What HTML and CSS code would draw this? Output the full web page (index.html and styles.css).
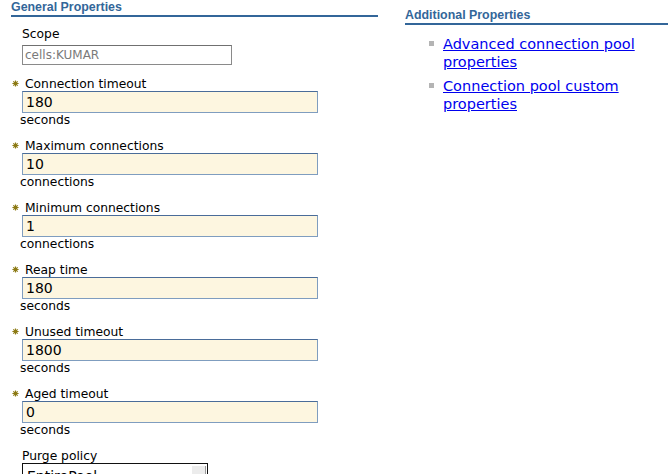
FILE: index.html
```html
<!DOCTYPE html>
<html lang="en">
<head>
<meta charset="utf-8">
<title>Connection pools</title>
<link rel="stylesheet" href="styles.css">
</head>
<body>
<div class="page">
  <section class="col-left">
    <h2 class="section-title">General Properties</h2>
    <div class="scope">
      <div class="plain-label">Scope</div>
      <input class="readonly-field" type="text" value="cells:KUMAR" readonly>
    </div>

    <div class="field">
      <div class="req-label"><svg class="req" viewBox="0 0 7 7"><path d="M3.5 0.4V6.6M0.4 3.5H6.6M1.3 1.3L5.7 5.7M5.7 1.3L1.3 5.7"/></svg><span>Connection timeout</span></div>
      <input class="text-field" type="text" value="180">
      <div class="unit">seconds</div>
    </div>

    <div class="field">
      <div class="req-label"><svg class="req" viewBox="0 0 7 7"><path d="M3.5 0.4V6.6M0.4 3.5H6.6M1.3 1.3L5.7 5.7M5.7 1.3L1.3 5.7"/></svg><span>Maximum connections</span></div>
      <input class="text-field" type="text" value="10">
      <div class="unit">connections</div>
    </div>

    <div class="field">
      <div class="req-label"><svg class="req" viewBox="0 0 7 7"><path d="M3.5 0.4V6.6M0.4 3.5H6.6M1.3 1.3L5.7 5.7M5.7 1.3L1.3 5.7"/></svg><span>Minimum connections</span></div>
      <input class="text-field" type="text" value="1">
      <div class="unit">connections</div>
    </div>

    <div class="field">
      <div class="req-label"><svg class="req" viewBox="0 0 7 7"><path d="M3.5 0.4V6.6M0.4 3.5H6.6M1.3 1.3L5.7 5.7M5.7 1.3L1.3 5.7"/></svg><span>Reap time</span></div>
      <input class="text-field" type="text" value="180">
      <div class="unit">seconds</div>
    </div>

    <div class="field">
      <div class="req-label"><svg class="req" viewBox="0 0 7 7"><path d="M3.5 0.4V6.6M0.4 3.5H6.6M1.3 1.3L5.7 5.7M5.7 1.3L1.3 5.7"/></svg><span>Unused timeout</span></div>
      <input class="text-field" type="text" value="1800">
      <div class="unit">seconds</div>
    </div>

    <div class="field">
      <div class="req-label"><svg class="req" viewBox="0 0 7 7"><path d="M3.5 0.4V6.6M0.4 3.5H6.6M1.3 1.3L5.7 5.7M5.7 1.3L1.3 5.7"/></svg><span>Aged timeout</span></div>
      <input class="text-field" type="text" value="0">
      <div class="unit">seconds</div>
    </div>

    <div class="field">
      <div class="plain-label purge-label">Purge policy</div>
      <div class="listbox">
        <div class="options">
          <div class="option">EntirePool</div>
          <div class="option">FailingConnectionOnly</div>
        </div>
        <div class="scrollbar"></div>
      </div>
    </div>
  </section>

  <section class="col-right">
    <h2 class="section-title">Additional Properties</h2>
    <ul class="links">
      <li><a href="#">Advanced connection pool properties</a></li>
      <li><a href="#">Connection pool custom properties</a></li>
    </ul>
  </section>
</div>
</body>
</html>
```

FILE: styles.css
```css
html, body {
  margin: 0;
  height: 474px;
  overflow: hidden;
  background: #ffffff;
}

body {
  font-family: "DejaVu Sans", sans-serif;
  font-size: 12.3px;
  color: #000;
}

.page {
  display: flex;
  gap: 27px;
  padding-left: 11px;
}

.col-left {
  width: 367px;
  flex: none;
}

.col-right {
  flex: 1;
  padding-top: 8px;
}

.section-title {
  margin: 0;
  font: bold 12.4px/15px "Liberation Sans", Arial, sans-serif;
  color: #336699;
  border-bottom: 2px solid #336699;
}

.scope {
  padding-left: 11px;
  margin-top: 10px;
}

.plain-label {
  line-height: 14px;
}

.readonly-field {
  display: block;
  box-sizing: border-box;
  width: 210px;
  height: 20px;
  margin: 4px 0 0;
  padding: 0 2px;
  border: 1px solid #8a8a8a;
  border-top-color: #707070;
  background: #fff;
  font: 12px "DejaVu Sans", sans-serif;
  color: #7a7a7a;
  outline: none;
}

.field {
  margin-top: 12px;
}

.req-label {
  display: flex;
  align-items: flex-start;
  line-height: 14px;
}

.req {
  width: 7px;
  height: 7px;
  margin: 3px 6px 0 1px;
  flex: none;
  fill: none;
  stroke: #8c7a14;
  stroke-width: 1.2;
}

.text-field {
  display: block;
  box-sizing: border-box;
  margin: 0 0 0 11px;
  width: 296px;
  height: 22px;
  padding: 0 3px;
  border: 1px solid #7f9dbf;
  border-top-color: #4a6c99;
  background: #fdf6e0;
  font: 14px "DejaVu Sans", sans-serif;
  color: #000;
  outline: none;
}

.unit {
  margin-left: 9px;
  line-height: 14px;
}

.purge-label {
  margin-left: 11px;
}

.listbox {
  display: flex;
  box-sizing: border-box;
  width: 186px;
  height: 60px;
  margin-left: 11px;
  padding: 1px;
  border: 1px solid #111;
  background: #fff;
}

.options {
  flex: 1;
  padding: 3px 0 0 3px;
}

.option {
  font: 14px/16px "DejaVu Sans", sans-serif;
  white-space: nowrap;
  overflow: hidden;
}

.scrollbar {
  width: 13px;
  height: 40px;
  margin-top: 1px;
  background: #ececec;
  border-right: 1px solid #9a9a9a;
  flex: none;
}

.links {
  list-style: none;
  margin: 10px 0 0;
  padding: 0 0 0 24px;
}

.links li {
  display: flex;
  gap: 9px;
  font: 14.5px/18px "DejaVu Sans", sans-serif;
  margin-bottom: 6px;
}

.links li::before {
  content: "";
  flex: none;
  width: 5px;
  height: 5px;
  margin-top: 6px;
  background: #b4b4b4;
}

.links a {
  color: #0000ee;
  text-decoration: underline;
}
```
